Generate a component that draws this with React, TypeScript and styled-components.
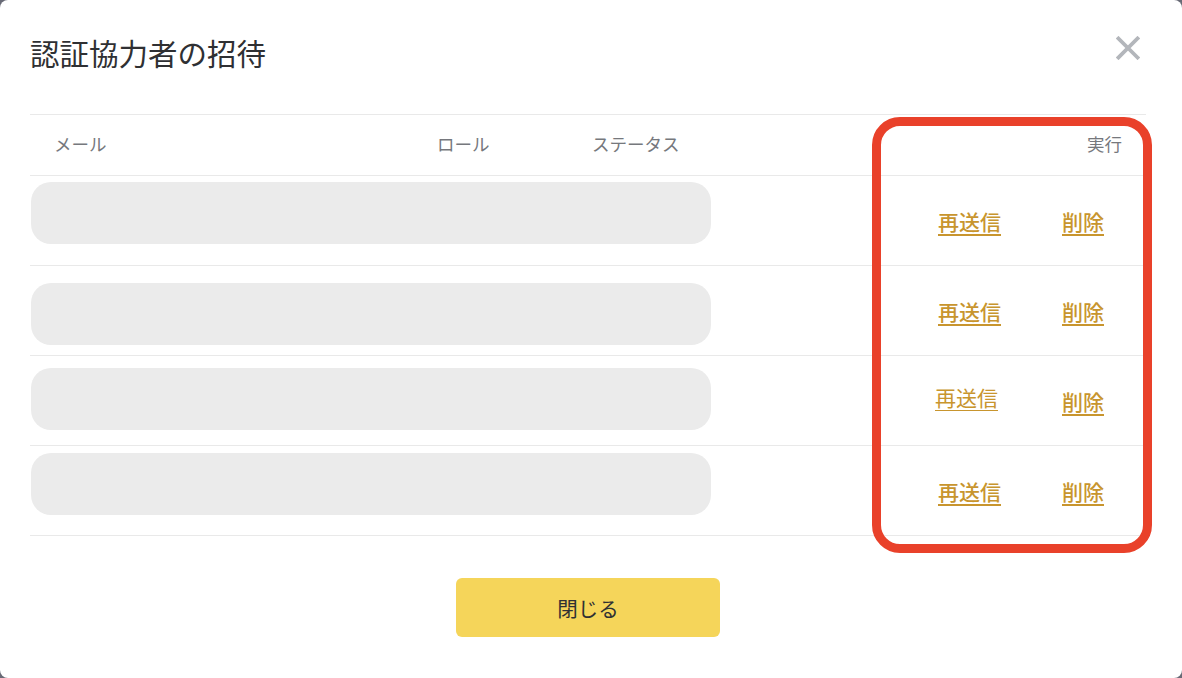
import React from "react";
import styled, { createGlobalStyle } from "styled-components";

const GlobalStyle = createGlobalStyle`
  html, body {
    margin: 0;
    padding: 0;
    background: #686a76;
  }
  body {
    font-family: "Noto Sans CJK JP", "Noto Sans", sans-serif;
    color: #333;
  }
`;

type Invite = {
  id: number;
  offset: number;
  resendMuted?: boolean;
};

const invites: Invite[] = [
  { id: 1, offset: 6 },
  { id: 2, offset: 17 },
  { id: 3, offset: 12, resendMuted: true },
  { id: 4, offset: 7 },
];

function CloseIcon() {
  return (
    <svg width="24" height="24" viewBox="0 0 24 24" fill="none">
      <path d="M2.5 2.5L21.5 21.5M21.5 2.5L2.5 21.5" stroke="#b3b6bb" strokeWidth="3.8" strokeLinecap="square" />
    </svg>
  );
}

export default function App() {
  return (
    <>
      <GlobalStyle />
      <Modal>
        <ModalHeader>
          <Title>認証協力者の招待</Title>
          <CloseButton aria-label="閉じる">
            <CloseIcon />
          </CloseButton>
        </ModalHeader>

        <Table>
          <HeadRow>
            <HeadCell>メール</HeadCell>
            <HeadCell>ロール</HeadCell>
            <HeadCell>ステータス</HeadCell>
            <HeadCell align="right">実行</HeadCell>
          </HeadRow>
          {invites.map((invite) => (
            <Row key={invite.id}>
              <Skeleton offset={invite.offset} />
              <Actions>
                <ActionLink muted={invite.resendMuted}>再送信</ActionLink>
                <ActionLink>削除</ActionLink>
              </Actions>
            </Row>
          ))}
        </Table>

        <Footer>
          <CloseLargeButton>閉じる</CloseLargeButton>
        </Footer>

        <Highlight />
      </Modal>
    </>
  );
}

const Modal = styled.div`
  position: relative;
  box-sizing: border-box;
  width: 1182px;
  height: 678px;
  background: #ffffff;
  border-radius: 8px;
  padding: 28px 36px 0 30px;
  overflow: hidden;
`;

const ModalHeader = styled.div`
  display: flex;
  align-items: center;
  justify-content: space-between;
  height: 48px;
  margin-bottom: 38px;
`;

const Title = styled.h1`
  margin: 0;
  font-size: 29.5px;
  font-weight: 400;
  color: #2f3033;
  line-height: 48px;
`;

const CloseButton = styled.button`
  display: flex;
  align-items: center;
  justify-content: center;
  border: none;
  background: none;
  padding: 0;
  margin-right: 6px;
  margin-top: -8px;
  cursor: pointer;
`;

const Table = styled.div`
  border-top: 1px solid #e9e9e9;
`;

const HeadRow = styled.div`
  display: grid;
  grid-template-columns: 383px 155px 1fr auto;
  align-items: center;
  height: 61px;
  padding: 0 24px 4px;
  box-sizing: border-box;
  border-bottom: 1px solid #e9e9e9;
`;

const HeadCell = styled.div<{ align?: "left" | "right" }>`
  font-size: 17.5px;
  color: #76787d;
  text-align: ${(p) => p.align ?? "left"};
`;

const Row = styled.div`
  display: flex;
  justify-content: space-between;
  height: 89px;
  border-bottom: 1px solid #e9e9e9;
`;

const Skeleton = styled.div<{ offset: number }>`
  width: 680px;
  height: 62px;
  margin: ${(p) => p.offset}px 0 0 1px;
  border-radius: 20px;
  background: #ebebeb;
`;

const Actions = styled.div`
  display: flex;
  align-items: center;
  gap: 61px;
  padding: 0 42px 0 0;
`;

const ActionLink = styled.a<{ muted?: boolean }>`
  font-size: 21px;
  font-weight: ${(p) => (p.muted ? 400 : 500)};
  color: #c8952e;
  text-decoration: underline;
  text-decoration-thickness: ${(p) => (p.muted ? "1px" : "2px")};
  text-underline-offset: 4px;
  cursor: pointer;
  margin-top: ${(p) => (p.muted ? "-8px" : "0")};
  margin-left: ${(p) => (p.muted ? "-3px" : "0")};
  margin-right: ${(p) => (p.muted ? "3px" : "0")};
`;

const Footer = styled.div`
  display: flex;
  justify-content: center;
  padding-top: 42px;
`;

const CloseLargeButton = styled.button`
  width: 264px;
  height: 59px;
  border: none;
  border-radius: 6px;
  background: #f5d55a;
  font-family: inherit;
  font-size: 20.5px;
  color: #2f3033;
  cursor: pointer;
`;

const Highlight = styled.div`
  position: absolute;
  left: 872px;
  top: 117px;
  width: 280px;
  height: 436px;
  box-sizing: border-box;
  border: 9px solid #e9412a;
  border-radius: 28px;
  pointer-events: none;
`;
